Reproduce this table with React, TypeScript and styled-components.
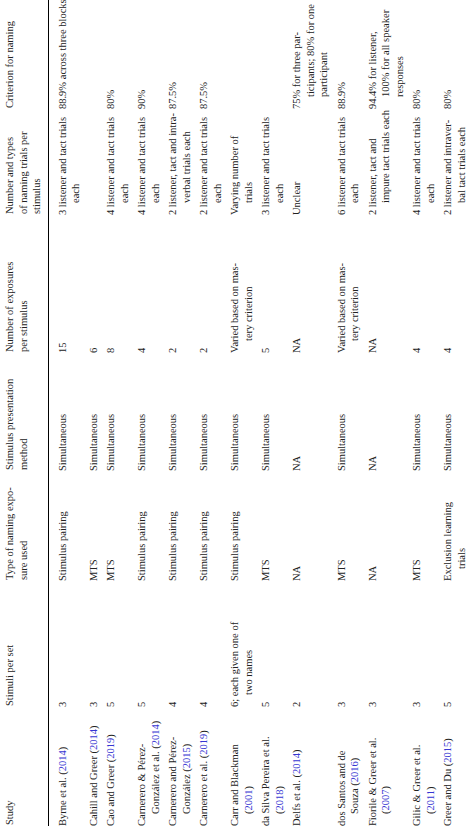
import styled, { createGlobalStyle } from "styled-components";

const GlobalStyle = createGlobalStyle`
  html, body {
    margin: 0;
    padding: 0;
    background: #fff;
  }
`;

type Row = string[][];

const headers: string[][] = [
  ["Study"],
  ["Stimuli per set"],
  ["Type of naming expo-", "sure used"],
  ["Stimulus presentation", "method"],
  ["Number of exposures", "per stimulus"],
  ["Number and types", "of naming trials per", "stimulus"],
  ["Criterion for naming"],
];

const rows: Row[] = [
  [["Byrne et al. (2014)"], ["3"], ["Stimulus pairing"], ["Simultaneous"], ["15"], ["3 listener and tact trials", "each"], ["88.9% across three blocks"]],
  [["Cahill and Greer (2014)"], ["3"], ["MTS"], ["Simultaneous"], ["6"], [], []],
  [["Cao and Greer (2019)"], ["5"], ["MTS"], ["Simultaneous"], ["8"], ["4 listener and tact trials", "each"], ["80%"]],
  [["Carnerero & Pérez-", "González et al. (2014)"], ["5"], ["Stimulus pairing"], ["Simultaneous"], ["4"], ["4 listener and tact trials", "each"], ["90%"]],
  [["Carnerero and Pérez-", "González (2015)"], ["4"], ["Stimulus pairing"], ["Simultaneous"], ["2"], ["2 listener, tact and intra-", "verbal trials each"], ["87.5%"]],
  [["Carnerero et al. (2019)"], ["4"], ["Stimulus pairing"], ["Simultaneous"], ["2"], ["2 listener and tact trials", "each"], ["87.5%"]],
  [["Carr and Blackman", "(2001)"], ["6; each given one of", "two names"], ["Stimulus pairing"], ["Simultaneous"], ["Varied based on mas-", "tery criterion"], ["Varying number of", "trials"], []],
  [["da Silva Pereira et al.", "(2018)"], ["5"], ["MTS"], ["Simultaneous"], ["5"], ["3 listener and tact trials", "each"], []],
  [["Delfs et al. (2014)"], ["2"], ["NA"], ["NA"], ["NA"], ["Unclear"], ["75% for three par-", "ticipants; 80% for one", "participant"]],
  [["dos Santos and de", "Souza (2016)"], ["3"], ["MTS"], ["Simultaneous"], ["Varied based on mas-", "tery criterion"], ["6 listener and tact trials", "each"], ["88.9%"]],
  [["Fiorile & Greer et al.", "(2007)"], ["3"], ["NA"], ["NA"], ["NA"], ["2 listener, tact and", "impure tact trials each"], ["94.4% for listener,", "100% for all speaker", "responses"]],
  [["Gilic & Greer et al.", "(2011)"], ["3"], ["MTS"], ["Simultaneous"], ["4"], ["4 listener and tact trials", "each"], ["80%"]],
  [["Greer and Du (2015)"], ["5"], ["Exclusion learning", "trials"], ["Simultaneous"], ["4"], ["2 listener and intraver-", "bal tact trials each"], ["80%"]],
];

const Page = styled.div`
  width: 474px;
  height: 826px;
  overflow: hidden;
  background: #fff;
`;

// the table is printed sideways: build it upright, then turn it a quarter left
const Sideways = styled.div`
  width: 826px;
  height: 474px;
  transform-origin: 0 0;
  transform: translateY(826px) rotate(-90deg);
  font-family: "Liberation Serif", "Times New Roman", serif;
  font-size: 10.5px;
  line-height: 13.5px;
  color: #222;
`;

const Grid = styled.div`
  display: grid;
  grid-template-columns: 119px 126px 110px 118px 138px 106px 1fr;
  padding-left: 1px;
`;

const HeadRow = styled(Grid)`
  padding-top: 3px;
  padding-bottom: 4px;
  border-bottom: 1.5px solid #000;
  margin-bottom: 5px;
`;

const BodyRow = styled(Grid)`
  padding: 2px 0;
`;

const Cell = styled.div<{ $hang?: boolean }>`
  white-space: nowrap;
  padding-left: ${(p) => (p.$hang ? "12px" : "0")};
  text-indent: ${(p) => (p.$hang ? "-12px" : "0")};
`;

const Year = styled.span`
  color: #3636d2;
`;

function withYears(line: string) {
  return line.split(/(\d{4})/).map((part, i) =>
    /^\d{4}$/.test(part) ? <Year key={i}>{part}</Year> : part
  );
}

function Lines({ lines, study }: { lines: string[]; study?: boolean }) {
  return (
    <>
      {lines.map((l, i) => (
        <span key={i}>
          {i > 0 && <br />}
          {study ? withYears(l) : l}
        </span>
      ))}
    </>
  );
}

export default function App() {
  return (
    <Page>
      <GlobalStyle />
      <Sideways>
        <HeadRow>
          {headers.map((h, i) => (
            <Cell key={i}>
              <Lines lines={h} />
            </Cell>
          ))}
        </HeadRow>
        {rows.map((r, ri) => (
          <BodyRow key={ri}>
            {r.map((c, ci) => (
              <Cell key={ci} $hang>
                <Lines lines={c} study={ci === 0} />
              </Cell>
            ))}
          </BodyRow>
        ))}
      </Sideways>
    </Page>
  );
}
